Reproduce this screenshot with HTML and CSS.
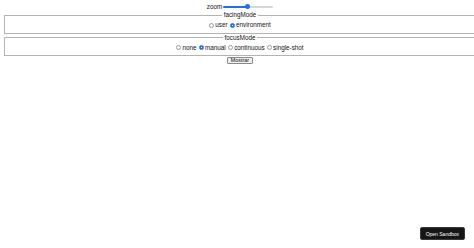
FILE: index.html
```html
<!DOCTYPE html>
<html lang="en">
<head>
<meta charset="utf-8">
<title>Camera settings</title>
<link rel="stylesheet" href="styles.css">
</head>
<body>
<div class="page">
  <div class="zoom-row">
    <label class="zoom-label" for="zoom">zoom</label>
    <input type="range" id="zoom" class="slider" min="0" max="100" value="48" style="--v:48%">
  </div>
  <fieldset class="group">
    <legend class="group-title">facingMode</legend>
    <div class="options">
      <label class="option"><input type="radio" name="facing" class="radio">user</label>
      <label class="option"><input type="radio" name="facing" class="radio" checked>environment</label>
    </div>
  </fieldset>
  <fieldset class="group">
    <legend class="group-title">focusMode</legend>
    <div class="options">
      <label class="option"><input type="radio" name="focus" class="radio">none</label>
      <label class="option"><input type="radio" name="focus" class="radio" checked>manual</label>
      <label class="option"><input type="radio" name="focus" class="radio">continuous</label>
      <label class="option"><input type="radio" name="focus" class="radio">single-shot</label>
    </div>
  </fieldset>
  <div class="actions">
    <button class="btn" type="button">Mostrar</button>
  </div>
</div>
<a class="sandbox-btn" href="#">Open Sandbox</a>
</body>
</html>
```
FILE: styles.css
```css
html, body {
  margin: 0;
  padding: 0;
  overflow: hidden;
  background: #fff;
}
body {
  font-family: "Liberation Sans", Arial, sans-serif;
  font-size: 6.3px;
  color: #111;
}
.page {
  margin-left: 4px;
  width: 472px;
}
.zoom-row {
  margin-top: 2px;
  height: 9px;
  display: flex;
  justify-content: center;
  align-items: center;
}
.zoom-label {
  line-height: 9px;
}
.slider {
  -webkit-appearance: none;
  appearance: none;
  width: 50px;
  height: 6px;
  margin: 0 0 0 1px;
  padding: 0;
  background: transparent;
}
.slider::-webkit-slider-runnable-track {
  height: 2px;
  border-radius: 1px;
  background: linear-gradient(to right, #1f6fe5 var(--v), #d6d6d6 var(--v));
}
.slider::-webkit-slider-thumb {
  -webkit-appearance: none;
  appearance: none;
  width: 5px;
  height: 5px;
  border-radius: 50%;
  background: #1f6fe5;
  margin-top: -1.5px;
  border: none;
}
.group {
  margin: 0;
  padding: 2px 4px 3.5px;
  border: 1px solid #b3b3b3;
  min-inline-size: 0;
}
.group-title {
  margin: 0 auto;
  padding: 0 2px;
  line-height: 8px;
  font-size: 6.3px;
}
.options {
  height: 8px;
  display: flex;
  justify-content: center;
  align-items: center;
  gap: 2.5px;
}
.option {
  display: inline-flex;
  align-items: center;
  gap: 1px;
  line-height: 8px;
}
.radio {
  -webkit-appearance: none;
  appearance: none;
  width: 5px;
  height: 5px;
  margin: 0;
  border-radius: 50%;
  border: 0.6px solid #9a9a9a;
  background: #fff;
  box-sizing: border-box;
}
.radio:checked {
  border-color: #1f6fe5;
  background: radial-gradient(circle, #ffffff 0 22%, #1f6fe5 32%);
}
.actions {
  display: flex;
  justify-content: center;
  padding-top: 0.5px;
}
.btn {
  font-family: "Liberation Sans", Arial, sans-serif;
  font-size: 5.4px;
  line-height: 5.5px;
  height: 7.5px;
  padding: 0 2.4px;
  margin: 0;
  background: #efefef;
  color: #111;
  border: 0.8px solid #8a8a8a;
  border-radius: 1px;
}
.sandbox-btn {
  position: fixed;
  right: 9px;
  bottom: 8px;
  height: 13px;
  padding: 0 5px;
  box-sizing: border-box;
  display: flex;
  align-items: center;
  background: #151515;
  border: 1px solid #3a3a3a;
  border-radius: 2px;
  color: #fff;
  font-size: 5px;
  text-decoration: none;
}
```
